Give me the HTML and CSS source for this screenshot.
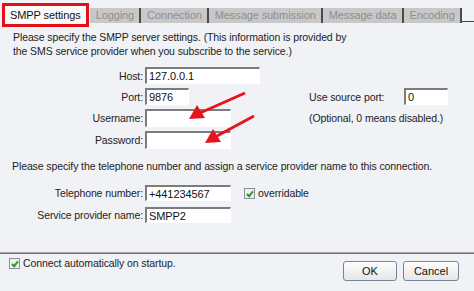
FILE: index.html
```html
<!DOCTYPE html>
<html lang="en">
<head>
  <meta charset="UTF-8" />
  <title>SMPP settings</title>
  <link rel="stylesheet" href="styles.css">
</head>
<body>

  <div class="tabs">
    <div class="tab ativa">SMPP settings</div>
    <div class="tab-grupo">
      <div class="tab">Logging</div>
      <div class="tab">Connection</div>
      <div class="tab">Message submission</div>
      <div class="tab">Message data</div>
      <div class="tab">Encoding</div>
    </div>
    <div class="tab-resto"></div>
  </div>

  <div class="painel">
    <p class="texto">Please specify the SMPP server settings. (This information is provided by<br>the SMS service provider when you subscribe to the service.)</p>

    <div class="grade servidor">
      <label>Host:</label>
      <input class="largo" type="text" value="127.0.0.1">

      <label>Port:</label>
      <input class="curto" type="text" value="9876">
      <span class="rotulo-porta">Use source port:</span>
      <input class="porta" type="text" value="0">

      <label>Username:</label>
      <input class="medio" type="text" value="">
      <span class="opcional">(Optional, 0 means disabled.)</span>

      <label>Password:</label>
      <input class="medio" type="password" value="">
    </div>

    <p class="texto segundo">Please specify the telephone number and assign a service provider name to this connection.</p>

    <div class="grade telefone">
      <label>Telephone number:</label>
      <div class="linha">
        <input class="medio" type="text" value="+441234567">
        <span class="check"><span class="caixa"></span>overridable</span>
      </div>

      <label>Service provider name:</label>
      <input class="medio" type="text" value="SMPP2">
    </div>

    <!-- setas vermelhas de destaque -->
    <svg class="setas" width="474" height="291" viewBox="0 0 474 291">
      <line x1="245" y1="93" x2="200" y2="113" stroke="#e8141c" stroke-width="3" />
      <polygon points="189,119 197,105 205,118" fill="#e8141c" />
      <line x1="254" y1="116" x2="217" y2="136" stroke="#e8141c" stroke-width="3" />
      <polygon points="205,143 213,129 221,142" fill="#e8141c" />
    </svg>
  </div>

  <div class="rodape">
    <span class="check"><span class="caixa"></span>Connect automatically on startup.</span>
    <div class="botoes">
      <button class="ok">OK</button>
      <button class="cancelar">Cancel</button>
    </div>
  </div>

</body>
</html>
```

FILE: styles.css
```css
body {
  margin: 0;
  width: 474px;
  height: 291px;
  overflow: hidden;
  background-color: #f1f2f6;
  font-family: "Liberation Sans", Arial, sans-serif;
  font-size: 10.5px;
  letter-spacing: -0.1px;
  color: #222;
  white-space: nowrap;
  position: relative;
}

.tabs {
  display: flex;
  align-items: flex-start;
  height: 27px;
  padding-left: 2px;
}

.tab {
  flex-shrink: 0;
}

.tab.ativa {
  margin-top: 3px;
  height: 18px;
  line-height: 18px;
  padding: 0 5px 0 5px;
  background-color: #fbfbfb;
  border: 3px solid #e3101a;
  color: #111;
  font-size: 11px;
}

.tab-grupo {
  display: flex;
  flex-shrink: 0;
  margin-top: 8px;
  margin-left: 1px;
  height: 15px;
  background-color: #c8c8c8;
}

.tab-grupo .tab {
  padding: 0 5px 0 6px;
  line-height: 15px;
  font-size: 11px;
  color: #8e8e8e;
  border-right: 2px solid #4a4a4a;
}

.tab-resto {
  flex: 1;
  margin-top: 8px;
  height: 13px;
  border-bottom: 1px solid #444;
}

.painel {
  padding: 3px 0 0 0;
  height: 223px;
}

.texto {
  margin: 0 0 0 13px;
  line-height: 14px;
}

.texto.segundo {
  margin-top: 10px;
  margin-left: 12px;
}

.grade {
  display: grid;
  grid-template-columns: 135px 160px 95px 44px;
  column-gap: 2px;
  margin-left: 8px;
}

.servidor {
  margin-top: 9px;
  grid-template-rows: 17px 17px 18px 18px;
  row-gap: 4px;
}

.telefone {
  margin-top: 12px;
  grid-template-rows: 16px 16px;
  row-gap: 6px;
}

.grade label {
  grid-column: 1;
  text-align: right;
  align-self: center;
}

input {
  box-sizing: border-box;
  height: 100%;
  margin: 0;
  padding: 0 2px;
  font-family: inherit;
  font-size: 11px;
  letter-spacing: -0.1px;
  color: #111;
  background-color: #fff;
  border: 1px solid #fff;
  border-top: 2px solid #7c7c7c;
  border-left: 2px solid #7c7c7c;
  justify-self: start;
}

.largo { width: 115px; }
.curto { width: 44px; }
.medio { width: 86px; }

.porta {
  width: 44px;
  grid-column: 4;
}

.rotulo-porta {
  grid-column: 3;
  margin-left: 2px;
  align-self: center;
}

.opcional {
  grid-column: 3 / 5;
  margin-left: 2px;
  align-self: center;
}

.linha {
  display: flex;
  align-items: center;
  gap: 13px;
}

.linha input {
  height: 16px;
}

.check {
  display: flex;
  align-items: center;
  gap: 3px;
}

.caixa {
  box-sizing: border-box;
  width: 11px;
  height: 11px;
  border: 1px solid #8a8f99;
  background-color: #eef0ee;
  position: relative;
}

.caixa::after {
  content: "";
  position: absolute;
  left: 3px;
  top: 1px;
  width: 2px;
  height: 5px;
  border: solid #2c9a2c;
  border-width: 0 2px 2px 0;
  transform: rotate(40deg);
}

.setas {
  position: absolute;
  left: 0;
  top: 0;
  pointer-events: none;
}

.rodape {
  display: flex;
  justify-content: space-between;
  align-items: flex-start;
  border-top: 1px solid #6e6e6e;
  box-shadow: 0 -1px 0 #a9a9a9;
  padding: 3px 15px 0 9px;
  height: 34px;
}

.botoes {
  display: flex;
  gap: 6px;
  margin-top: 4px;
}

button {
  height: 20px;
  padding: 0;
  font-family: inherit;
  font-size: 11px;
  color: #111;
  background: linear-gradient(#fdfdfd, #e6e6e6);
  border: 1px solid #76859a;
  border-radius: 3px;
}

.ok { width: 54px; }
.cancelar { width: 56px; }
```
